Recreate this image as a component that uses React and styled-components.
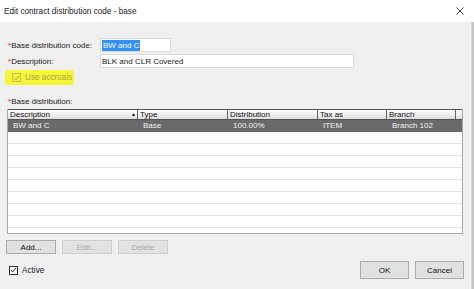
import React from 'react';
import styled, { createGlobalStyle } from 'styled-components';

const GlobalStyle = createGlobalStyle`
  html, body {
    margin: 0;
    padding: 0;
    background: #c6c6c6;
  }
  body {
    font-family: "Liberation Sans", Arial, sans-serif;
    font-size: 8px;
    color: #1a1a1a;
  }
`;

const columns = [
  { title: 'Description', value: 'BW and C', sort: true },
  { title: 'Type', value: 'Base' },
  { title: 'Distribution', value: '100.00%' },
  { title: 'Tax as', value: 'ITEM' },
  { title: 'Branch', value: 'Branch 102' },
];

function Check({ disabled }) {
  return (
    <CheckBox $disabled={disabled}>
      <svg width='8' height='8' viewBox='0 0 8 8'>
        <path
          d='M1 4.2 L3.1 6.2 L7 1.6'
          fill='none'
          stroke={disabled ? '#a7a33a' : '#222'}
          strokeWidth='1.1'
        />
      </svg>
    </CheckBox>
  );
}

function App() {
  return (
    <>
      <GlobalStyle />
      <Window>
        <TitleBar>
          <span>Edit contract distribution code - base</span>
          <svg width='8' height='8' viewBox='0 0 8 8'>
            <path d='M0.5 0.5 L7.5 7.5 M7.5 0.5 L0.5 7.5' stroke='#333' strokeWidth='0.9' />
          </svg>
        </TitleBar>
        <Body>
          <Content>
            <FormRow>
              <Label><Req>*</Req>Base distribution code:</Label>
              <Input $width={71}>
                <Selected>BW and C</Selected>
              </Input>
            </FormRow>
            <FormRow>
              <Label><Req>*</Req>Description:</Label>
              <Input $width={254}>BLK and CLR Covered</Input>
            </FormRow>
            <Highlight>
              <Check disabled />
              <span>Use accruals</span>
            </Highlight>
            <SectionLabel><Req>*</Req>Base distribution:</SectionLabel>
            <Table>
              <HeaderRow>
                {columns.map((c) => (
                  <HeaderCell key={c.title}>
                    {c.title}
                    {c.sort && <SortArrow>▲</SortArrow>}
                  </HeaderCell>
                ))}
                <HeaderCell />
              </HeaderRow>
              <DataRow $selected>
                {columns.map((c) => (
                  <DataCell key={c.title}>{c.value}</DataCell>
                ))}
                <DataCell />
              </DataRow>
              {Array.from({ length: 8 }).map((_, i) => (
                <DataRow key={i} />
              ))}
            </Table>
            <ButtonRow>
              <Button>Add...</Button>
              <Button disabled>Edit...</Button>
              <Button disabled>Delete</Button>
            </ButtonRow>
          </Content>
          <Footer>
            <ActiveLabel>
              <Check />
              <span>Active</span>
            </ActiveLabel>
            <DialogButtons>
              <DialogButton>OK</DialogButton>
              <DialogButton>Cancel</DialogButton>
            </DialogButtons>
          </Footer>
        </Body>
      </Window>
    </>
  );
}

export default App;

const Window = styled.div`
  width: 474px;
  height: 289px;
  display: flex;
  flex-direction: column;
  overflow: hidden;
`;

const TitleBar = styled.div`
  height: 22px;
  background: #ffffff;
  display: flex;
  align-items: center;
  justify-content: space-between;
  padding: 0 10px 0 4px;
  font-size: 8.2px;
  color: #222;
`;

const Body = styled.div`
  flex: 1;
  width: 471px;
  background: #f0f0f0;
  border-right: 1px solid #d6d6d6;
  display: flex;
  flex-direction: column;
  justify-content: space-between;
`;

const Content = styled.div`
  display: flex;
  flex-direction: column;
  padding: 16px 0 0 7px;
`;

const FormRow = styled.div`
  display: flex;
  align-items: center;
  height: 14px;
  margin-bottom: 2px;
`;

const Label = styled.div`
  width: 92px;
  padding-left: 1px;
`;

const Req = styled.span`
  color: #d22;
`;

const Input = styled.div`
  width: ${(p) => p.$width}px;
  height: 14px;
  box-sizing: border-box;
  background: #ffffff;
  border: 1px solid #dadada;
  padding: 0 1px;
  display: flex;
  align-items: center;
`;

const Selected = styled.span`
  background: #3390ff;
  color: #ffffff;
  padding: 1px 1px;
`;

const Highlight = styled.div`
  display: flex;
  align-items: center;
  gap: 4px;
  align-self: flex-start;
  height: 15px;
  margin: 0 0 0 -2px;
  padding: 0 2px 0 7px;
  white-space: nowrap;
  background: #f4f53c;
  border-radius: 3px;
  color: #aaa63a;
  font-size: 8.2px;
`;

const CheckBox = styled.span`
  width: 9px;
  height: 9px;
  box-sizing: border-box;
  border: 1px solid ${(p) => (p.$disabled ? '#c8c24a' : '#333')};
  background: ${(p) => (p.$disabled ? 'transparent' : '#fff')};
  display: flex;
  align-items: center;
  justify-content: center;
`;

const SectionLabel = styled.div`
  margin-top: 12px;
  height: 12px;
  padding-left: 1px;
`;

const Table = styled.div`
  width: 456px;
  height: 125px;
  box-sizing: border-box;
  border: 1px solid #a8a8a8;
  border-top: none;
  background: #ffffff;
  overflow: hidden;
`;

const gridCols = '130px 90px 90px 69px 69px 1fr';

const HeaderRow = styled.div`
  display: grid;
  grid-template-columns: ${gridCols};
  height: 11px;
  box-sizing: border-box;
  border-top: 1px solid #555;
  border-bottom: 1px solid #555;
  background: linear-gradient(#ffffff, #dedede);
`;

const HeaderCell = styled.div`
  position: relative;
  padding-left: 2px;
  border-right: 1px solid #666;
  line-height: 9px;
  color: #111;

  &:last-child {
    border-right: none;
  }
`;

const SortArrow = styled.span`
  position: absolute;
  right: 1px;
  top: 0;
  font-size: 5px;
  line-height: 9px;
`;

const DataRow = styled.div`
  display: grid;
  grid-template-columns: ${gridCols};
  height: 12px;
  box-sizing: border-box;
  border-bottom: 1px solid ${(p) => (p.$selected ? '#6a6a6a' : '#e2e2e2')};
  background: ${(p) => (p.$selected ? '#6a6a6a' : '#ffffff')};
  color: #f2f2f2;
`;

const DataCell = styled.div`
  padding-left: 5px;
  line-height: 11px;
`;

const ButtonRow = styled.div`
  display: flex;
  gap: 6px;
  margin-top: 6px;
  margin-left: -1px;
`;

const Button = styled.button`
  width: 50px;
  height: 14px;
  padding: 0;
  font-family: inherit;
  font-size: 8px;
  background: ${(p) => (p.disabled ? '#e3e3e3' : '#e1e1e1')};
  border: 1px solid ${(p) => (p.disabled ? '#d0d0d0' : '#adadad')};
  color: ${(p) => (p.disabled ? '#a8a8a8' : '#111')};
`;

const Footer = styled.div`
  display: flex;
  align-items: center;
  justify-content: space-between;
  padding: 0 7px 10px 9px;
`;

const ActiveLabel = styled.div`
  display: flex;
  align-items: center;
  gap: 4px;
  font-size: 8.2px;
`;

const DialogButtons = styled.div`
  display: flex;
  gap: 6px;
`;

const DialogButton = styled.button`
  width: 49px;
  height: 18px;
  padding: 0;
  font-family: inherit;
  font-size: 8px;
  background: #e1e1e1;
  border: 1px solid #adadad;
  color: #111;
`;
